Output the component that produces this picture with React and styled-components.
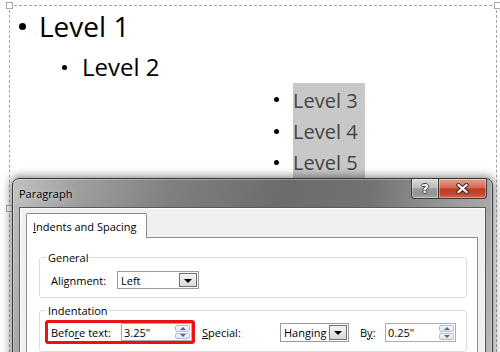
import styled, { createGlobalStyle } from "styled-components";

const Global = createGlobalStyle`
  html, body { margin: 0; padding: 0; background: #fff; }
  body { font-family: "Open Sans", "Liberation Sans", sans-serif; }
`

const Canvas = styled.div`
  position: relative;
  width: 500px;
  height: 352px;
  overflow: hidden;
  background: #fff;
`

/* ---------- slide ---------- */

const Slide = styled.div`
  position: relative;
  height: 400px;
  margin: 5px 3px 0 9px;
  padding-top: 1px;
  border: 1px dashed #a4a4a4;
  border-bottom: none;
  font-family: "Open Sans", "Liberation Sans", sans-serif;
`

const Handle = styled.span`
  position: absolute;
  top: ${p => p.$top}px;
  left: ${p => p.$left}px;
  width: 5px;
  height: 5px;
  border: 1px solid #a8a8a8;
  background: #fff;
`

const Item = styled.div`
  display: flex;
  align-items: center;
  margin-top: ${p => p.$top || 0}px;
  padding-left: ${p => p.$indent}px;
  gap: ${p => p.$gap}px;
  font-size: ${p => p.$size}px;
  line-height: ${p => p.$lh}px;
  color: #000;
`

const Bullet = styled.span`
  flex: none;
  width: ${p => p.$d}px;
  height: ${p => p.$d}px;
  border-radius: 50%;
  background: #000;
`

const Selected = styled.span`
  width: 72px;
  padding-top: ${p => (p.$first ? 2 : 0)}px;
  background: #c8c8c8;
  color: #444;
`

/* ---------- dialog ---------- */

const Window = styled.div`
  position: absolute;
  left: 12px;
  top: 178px;
  width: 481px;
  height: 190px;
  box-sizing: border-box;
  display: flex;
  flex-direction: column;
  border: 1px solid #3a3a3a;
  border-radius: 7px 7px 0 0;
  background: linear-gradient(105deg, #c2c2c2 0%, #a0a0a0 12%, #808080 30%, #6c6c6c 52%, #727272 68%, #9a9a9a 84%, #b8b8b8 100%);
  box-shadow: 0 0 9px 2px rgba(0, 0, 0, 0.45), inset 0 0 0 1px rgba(255, 255, 255, 0.3);
  font-family: "Open Sans", "Liberation Sans", sans-serif;
  font-size: 11px;
  line-height: 15px;
  color: #000;
`

const TitleBar = styled.div`
  flex: none;
  display: flex;
  justify-content: space-between;
  align-items: flex-start;
  height: 28px;
  padding: 0 5px 0 6px;
`

const Title = styled.span`
  margin-top: 7px;
  text-shadow: 0 0 6px rgba(255, 255, 255, 0.7);
`

const Caption = styled.div`
  display: flex;
`

const CaptionButton = styled.div`
  display: flex;
  align-items: center;
  justify-content: center;
  width: ${p => p.$w}px;
  height: 20px;
  box-sizing: border-box;
  border: 1px solid #3c3c3c;
  border-top: none;
  border-left: ${p => (p.$close ? "none" : "1px solid #3c3c3c")};
  border-radius: ${p => (p.$close ? "0 0 4px 0" : "0 0 0 4px")};
  background: ${p =>
    p.$close
      ? "linear-gradient(#e8a090 0%, #d46a52 45%, #c13b24 52%, #c6442c 80%, #d76a50 100%)"
      : "linear-gradient(#dcdcdc 0%, #bcbcbc 45%, #9c9c9c 52%, #929292 80%, #a8a8a8 100%)"};
  box-shadow: inset 0 0 0 1px rgba(255, 255, 255, 0.35);
`

const HelpGlyph = styled.span`
  font-family: "DejaVu Sans", sans-serif;
  font-weight: bold;
  font-size: 13px;
  line-height: 13px;
  color: #fff;
  text-shadow: -1px 0 #444, 1px 0 #444, 0 -1px #444, 0 1px #444;
`

const Client = styled.div`
  flex: 1;
  margin: 0 6px;
  padding: 5px 0 0 6px;
  border: 1px solid #5a5a5a;
  border-bottom: none;
  background: #f0f0f0;
  box-shadow: inset 1px 1px 0 #fff;
`

const TabStrip = styled.div`
  display: flex;
`

const Tab = styled.div`
  position: relative;
  z-index: 1;
  width: 121px;
  height: 25px;
  box-sizing: border-box;
  margin-bottom: -1px;
  padding: 5px 0 0 6px;
  border: 1px solid #898c95;
  border-bottom: none;
  border-radius: 2px 2px 0 0;
  background: #fff;
`

const TabPanel = styled.div`
  width: 452px;
  height: 140px;
  box-sizing: border-box;
  padding: 12px 10px 0 12px;
  border: 1px solid #898c95;
  background: #fff;
`

const Group = styled.fieldset`
  margin: ${p => p.$top || 0}px 0 0 0;
  min-width: 0;
  padding: 0 8px ${p => p.$bottom}px 7px;
  border: 1px solid #d5dfe5;
  border-radius: 3px;
`

const Legend = styled.legend`
  padding: 0 1px;
`

const Row = styled.div`
  display: flex;
  align-items: center;
  margin-top: ${p => p.$top}px;
  padding-left: ${p => p.$pad || 0}px;
`

const Label = styled.span`
  flex: none;
  width: ${p => p.$w}px;
  margin-left: ${p => p.$ml || 0}px;
  white-space: nowrap;
`

const Marked = styled.div`
  flex: none;
  display: flex;
  align-items: center;
  margin-left: -2px;
  padding-left: 3px;
  height: 24px;
  box-sizing: border-box;
  border: 3px solid #ee1111;
  border-radius: 3px;
`

const Combo = styled.div`
  flex: none;
  display: flex;
  align-items: center;
  justify-content: space-between;
  width: ${p => p.$w}px;
  height: ${p => p.$h}px;
  box-sizing: border-box;
  padding: 1px 1px 1px 3px;
  border: 1px solid #9a9a9a;
  background: #fff;
`

const DropButton = styled.span`
  display: flex;
  align-items: center;
  justify-content: center;
  width: 18px;
  height: 100%;
  box-sizing: border-box;
  border: 1px solid #707070;
  background: linear-gradient(#f4f4f4, #d9d9d9);

  &::after {
    content: "";
    border-left: 4px solid transparent;
    border-right: 4px solid transparent;
    border-top: 4px solid #000;
    margin-top: 1px;
  }
`

const Spin = styled.div`
  flex: none;
  display: flex;
  align-items: center;
  justify-content: space-between;
  width: ${p => p.$w}px;
  height: ${p => p.$h}px;
  box-sizing: border-box;
  padding: 1px 1px 1px 2px;
  border: 1px solid #abadb3;
  background: #fff;
`

const SpinButtons = styled.span`
  display: flex;
  flex-direction: column;
  gap: 1px;
  width: 15px;
  height: 100%;
`

const SpinHalf = styled.span`
  flex: 1;
  display: flex;
  align-items: center;
  justify-content: center;
  border: 1px solid #b8bec9;
  border-radius: 2px;
  background: linear-gradient(#f6f8fb, #dfe5ee);

  &::after {
    content: "";
    border-left: 3px solid transparent;
    border-right: 3px solid transparent;
    ${p => (p.$up ? "border-bottom: 3px solid #4f6797;" : "border-top: 3px solid #4f6797;")}
  }
`

const Spinner = ({ value, w, h }) => (
  <Spin $w={w} $h={h}>
    <span>{value}</span>
    <SpinButtons>
      <SpinHalf $up />
      <SpinHalf />
    </SpinButtons>
  </Spin>
)

const CloseIcon = () => (
  <svg width="13" height="11" viewBox="0 0 13 11">
    <g strokeLinecap="square">
      <path d="M2.5 2 L10.5 9 M10.5 2 L2.5 9" stroke="#3a2a26" strokeWidth="4.2" />
      <path d="M2.5 2 L10.5 9 M10.5 2 L2.5 9" stroke="#fff" strokeWidth="2.2" />
    </g>
  </svg>
)

export default function App() {
  return (
    <Canvas>
      <Global />
      <Slide>
        <Handle $top={-4} $left={-4} />
        <Handle $top={-4} $left={484} />
        <Handle $top={199} $left={-4} />

        <Item $indent={9} $gap={13} $size={28} $lh={38}>
          <Bullet $d={7} />
          Level 1
        </Item>
        <Item $top={6} $indent={52} $gap={15} $size={24} $lh={32}>
          <Bullet $d={5} />
          Level 2
        </Item>
        {["Level 3", "Level 4", "Level 5"].map((t, i) => (
          <Item key={t} $indent={264} $gap={14} $size={20} $lh={31}>
            <Bullet $d={5} />
            <Selected $first={i === 0}>{t}</Selected>
          </Item>
        ))}
      </Slide>

      <Window>
        <TitleBar>
          <Title>Paragraph</Title>
          <Caption>
            <CaptionButton $w={28}>
              <HelpGlyph>?</HelpGlyph>
            </CaptionButton>
            <CaptionButton $w={48} $close>
              <CloseIcon />
            </CaptionButton>
          </Caption>
        </TitleBar>

        <Client>
          <TabStrip>
            <Tab><u>I</u>ndents and Spacing</Tab>
          </TabStrip>
          <TabPanel>
            <Group $bottom={8}>
              <Legend>General</Legend>
              <Row $top={6} $pad={4}>
                <Label $w={66}>Ali<u>g</u>nment:</Label>
                <Combo $w={82} $h={18}>
                  <span>Left</span>
                  <DropButton />
                </Combo>
              </Row>
            </Group>

            <Group $top={5} $bottom={7}>
              <Legend>Indentation</Legend>
              <Row $top={2}>
                <Marked>
                  <Label $w={70}>Befo<u>r</u>e text:</Label>
                  <Spinner value={'3.25"'} w={71} h={18} />
                </Marked>
                <Label $w={78} $ml={7}><u>S</u>pecial:</Label>
                <Combo $w={69} $h={19}>
                  <span>Hanging</span>
                  <DropButton />
                </Combo>
                <Label $w={25} $ml={11}>B<u>y</u>:</Label>
                <Spinner value={'0.25"'} w={71} h={19} />
              </Row>
            </Group>
          </TabPanel>
        </Client>
      </Window>
    </Canvas>
  )
}
